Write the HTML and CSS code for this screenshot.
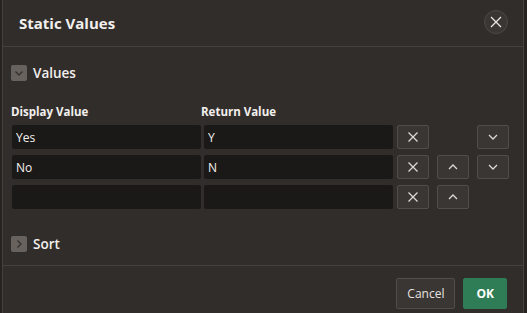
FILE: index.html
```html
<!DOCTYPE html>
<html lang="en">
<head>
    <meta charset="UTF-8">
    <title>Static Values</title>
    <link rel="stylesheet" href="styles.css">
</head>
<body>
    <div class="dialog">
        <div class="dialog-head">
            <h1>Static Values</h1>
            <button class="close" type="button" title="Close">
                <svg width="12" height="12" viewBox="0 0 12 12"><path d="M1 1L11 11M11 1L1 11" stroke="#e9e6e3" stroke-width="1.3" fill="none"/></svg>
            </button>
        </div>

        <div class="dialog-body">
            <div class="region">
                <div class="region-title">
                    <span class="toggle">
                        <svg width="10" height="10" viewBox="0 0 10 10"><path d="M1.5 3.5L5 7L8.5 3.5" stroke="#34302d" stroke-width="1.3" fill="none"/></svg>
                    </span>
                    Values
                </div>

                <div class="grid-head">
                    <span class="col-display">Display Value</span>
                    <span>Return Value</span>
                </div>

                <div class="row">
                    <input class="col-display" type="text" value="Yes">
                    <input class="col-return" type="text" value="Y">
                    <button class="icon-btn" type="button"><svg width="12" height="12" viewBox="0 0 12 12"><path d="M1.5 1.5L10.5 10.5M10.5 1.5L1.5 10.5" stroke="#dcd8d4" stroke-width="1.3" fill="none"/></svg></button>
                    <span class="spacer"></span>
                    <button class="icon-btn" type="button"><svg width="10" height="6" viewBox="0 0 10 6"><path d="M1 1L5 5L9 1" stroke="#dcd8d4" stroke-width="1.3" fill="none"/></svg></button>
                </div>
                <div class="row">
                    <input class="col-display" type="text" value="No">
                    <input class="col-return" type="text" value="N">
                    <button class="icon-btn" type="button"><svg width="12" height="12" viewBox="0 0 12 12"><path d="M1.5 1.5L10.5 10.5M10.5 1.5L1.5 10.5" stroke="#dcd8d4" stroke-width="1.3" fill="none"/></svg></button>
                    <button class="icon-btn" type="button"><svg width="10" height="6" viewBox="0 0 10 6"><path d="M1 5L5 1L9 5" stroke="#dcd8d4" stroke-width="1.3" fill="none"/></svg></button>
                    <button class="icon-btn" type="button"><svg width="10" height="6" viewBox="0 0 10 6"><path d="M1 1L5 5L9 1" stroke="#dcd8d4" stroke-width="1.3" fill="none"/></svg></button>
                </div>
                <div class="row">
                    <input class="col-display" type="text" value="">
                    <input class="col-return" type="text" value="">
                    <button class="icon-btn" type="button"><svg width="12" height="12" viewBox="0 0 12 12"><path d="M1.5 1.5L10.5 10.5M10.5 1.5L1.5 10.5" stroke="#dcd8d4" stroke-width="1.3" fill="none"/></svg></button>
                    <button class="icon-btn" type="button"><svg width="10" height="6" viewBox="0 0 10 6"><path d="M1 5L5 1L9 5" stroke="#dcd8d4" stroke-width="1.3" fill="none"/></svg></button>
                </div>
            </div>

            <div class="region region-sort">
                <div class="region-title">
                    <span class="toggle">
                        <svg width="10" height="10" viewBox="0 0 10 10"><path d="M3.5 1.5L7 5L3.5 8.5" stroke="#34302d" stroke-width="1.3" fill="none"/></svg>
                    </span>
                    Sort
                </div>
            </div>
        </div>

        <div class="dialog-foot">
            <button class="btn" type="button">Cancel</button>
            <button class="btn btn-hot" type="button">OK</button>
        </div>
    </div>
</body>
</html>
```

FILE: styles.css
```css
body{
    margin: 0;
    background-color: #262321;
    font-family: 'Open Sans', 'Noto Sans', sans-serif;
    color: #f2f0ee;
    overflow: hidden;
}
.dialog{
    margin-left: 2px;
    width: 520px;
    background-color: #312d2a;
    border: 1px solid #46413d;
    border-top: none;
}
.dialog-head{
    height: 46px;
    display: flex;
    align-items: center;
    justify-content: space-between;
    padding: 0 15px 0 16px;
    border-bottom: 1px solid #46413d;
}
h1{
    margin: 0;
    font-size: 15px;
    font-weight: 700;
}
.close{
    width: 24px;
    height: 24px;
    margin-top: -2px;
    border-radius: 50%;
    border: 1px solid #4e4945;
    background-color: #3a3633;
    padding: 0;
    display: flex;
    align-items: center;
    justify-content: center;
}
.dialog-body{
    padding: 18px 0 0 8px;
    height: 200px;
}
.region-title{
    display: flex;
    align-items: center;
    height: 16px;
    font-size: 13.5px;
    font-weight: 600;
}
.toggle{
    width: 16px;
    height: 16px;
    border-radius: 2px;
    background-color: #67625e;
    margin-right: 6px;
    display: flex;
    align-items: center;
    justify-content: center;
}
.grid-head{
    display: flex;
    margin-top: 23px;
    height: 16px;
    line-height: 16px;
    font-size: 11.5px;
    font-weight: 700;
    margin-bottom: 5px;
}
.grid-head .col-display{
    width: 190px;
}
.row{
    display: flex;
    align-items: center;
    height: 24px;
    margin-bottom: 6px;
    padding-left: 1px;
}
input{
    height: 24px;
    box-sizing: border-box;
    border: none;
    border-radius: 2px;
    background-color: #1b1917;
    color: #f2f0ee;
    font-family: inherit;
    font-size: 12px;
    padding: 0 4px;
    outline: none;
}
.col-display{
    width: 189px;
}
input.col-return{
    width: 189px;
    margin-left: 3px;
    margin-right: 4px;
}
.icon-btn{
    width: 32px;
    height: 24px;
    box-sizing: border-box;
    border: 1px solid #524d49;
    border-radius: 2px;
    background-color: #3a3633;
    padding: 0;
    margin-right: 8px;
    display: flex;
    align-items: center;
    justify-content: center;
}
.spacer{
    width: 32px;
    margin-right: 8px;
}
.region-sort{
    margin-top: 27px;
}
.dialog-foot{
    border-top: 1px solid #46413d;
    display: flex;
    justify-content: flex-end;
    gap: 8px;
    padding: 12px 16px 20px 0;
}
.btn{
    height: 31px;
    padding: 0 10px;
    border: 1px solid #524d49;
    border-radius: 2px;
    background-color: #3a3633;
    color: #e6e3e0;
    font-family: inherit;
    font-size: 12px;
}
.btn-hot{
    background-color: #2f7d57;
    border-color: #2f7d57;
    color: #fff;
    font-weight: 700;
    padding: 0 12px;
}
```
